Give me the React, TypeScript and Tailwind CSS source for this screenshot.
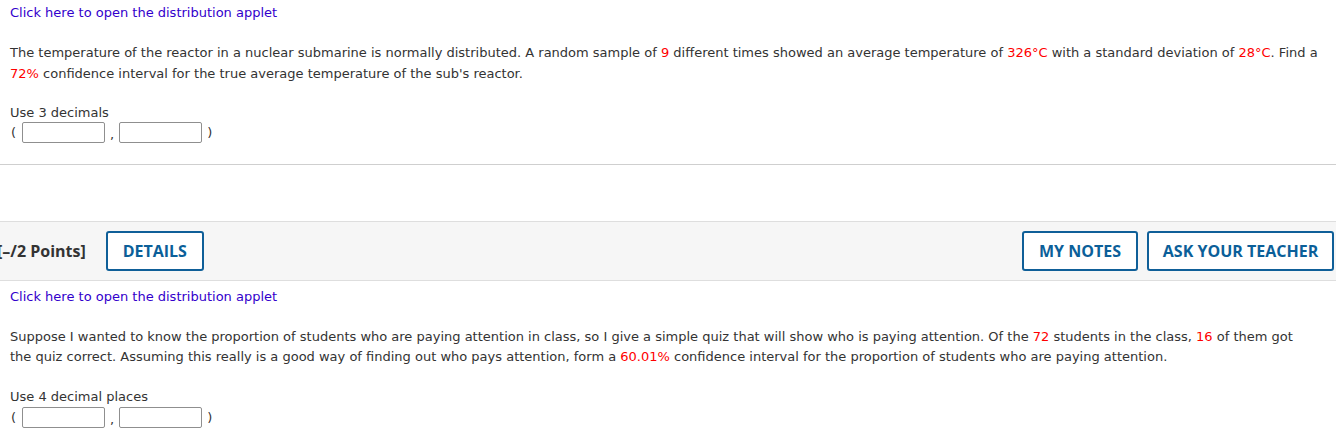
import React from "react";

const verdana = { fontFamily: '"DejaVu Sans", Verdana, sans-serif' };

function Box() {
  return <span className="inline-block w-[83px] h-[21px] border border-[#8f8f8f] rounded-[2px] bg-white align-middle" />;
}

function Inputs() {
  return (
    <div className="flex items-center h-[21px] text-[13px] text-[#333]">
      <span className="ml-[11px] mr-[6px]">(</span>
      <Box />
      <span className="mx-[5px] relative top-[2px]">,</span>
      <Box />
      <span className="ml-[5px]">)</span>
    </div>
  );
}

function Btn({ children, w }: { children: React.ReactNode; w: string }) {
  return (
    <div
      className={`h-[40px] ${w} border-2 border-[#0f5f98] rounded-[3px] bg-white flex items-center justify-center text-[16px] font-bold text-[#0b5f99]`}
      style={{ fontFamily: '"Open Sans", sans-serif' }}
    >
      {children}
    </div>
  );
}

const R = ({ children }: { children: React.ReactNode }) => <span className="text-[#ff0000]">{children}</span>;

export default function App() {
  return (
    <div className="w-[1336px] h-[439px] overflow-hidden bg-white text-[13px] text-[#333]" style={verdana}>
      <div className="px-[10px] pt-[4px]">
        <div className="h-[18px] leading-[18px] text-[#3300cc]">Click here to open the distribution applet</div>
        <p className="mt-[20px] leading-[21px] mr-[-6px]">
          The temperature of the reactor in a nuclear submarine is normally distributed. A random sample of <R>9</R> different times showed an average temperature of <R>326°C</R> with a standard deviation of <R>28°C</R>. Find a <R>72%</R> confidence interval for the true average temperature of the sub's reactor.
        </p>
        <div className="mt-[20px] leading-[18px]">Use 3 decimals</div>
      </div>
      <Inputs />
      <div className="mt-[21px] border-t border-[#cfcfcf]" />
      <div className="mt-[56px] h-[60px] bg-[#f6f6f6] border-t border-b border-[#dedede] flex items-center">
        <span className="ml-[-3px] text-[16px] font-bold text-[#333]" style={{ fontFamily: '"Open Sans", sans-serif' }}>[–/2 Points]</span>
        <div className="ml-[20px]"><Btn w="w-[98px]">DETAILS</Btn></div>
        <div className="flex-1" />
        <Btn w="w-[116px]">MY NOTES</Btn>
        <div className="ml-[9px] mr-[2px]"><Btn w="w-[187px]">ASK YOUR TEACHER</Btn></div>
      </div>
      <div className="px-[10px] pt-[7px]">
        <div className="h-[18px] leading-[18px] text-[#3300cc]">Click here to open the distribution applet</div>
        <p className="mt-[21px] leading-[20px] pr-[20px]">
          Suppose I wanted to know the proportion of students who are paying attention in class, so I give a simple quiz that will show who is paying attention. Of the <R>72</R> students in the class, <R>16</R> of them got the quiz correct. Assuming this really is a good way of finding out who pays attention, form a <R>60.01%</R> confidence interval for the proportion of students who are paying attention.
        </p>
        <div className="mt-[21px] leading-[18px]">Use 4 decimal places</div>
      </div>
      <div className="mt-[1px]">
        <Inputs />
      </div>
    </div>
  );
}
